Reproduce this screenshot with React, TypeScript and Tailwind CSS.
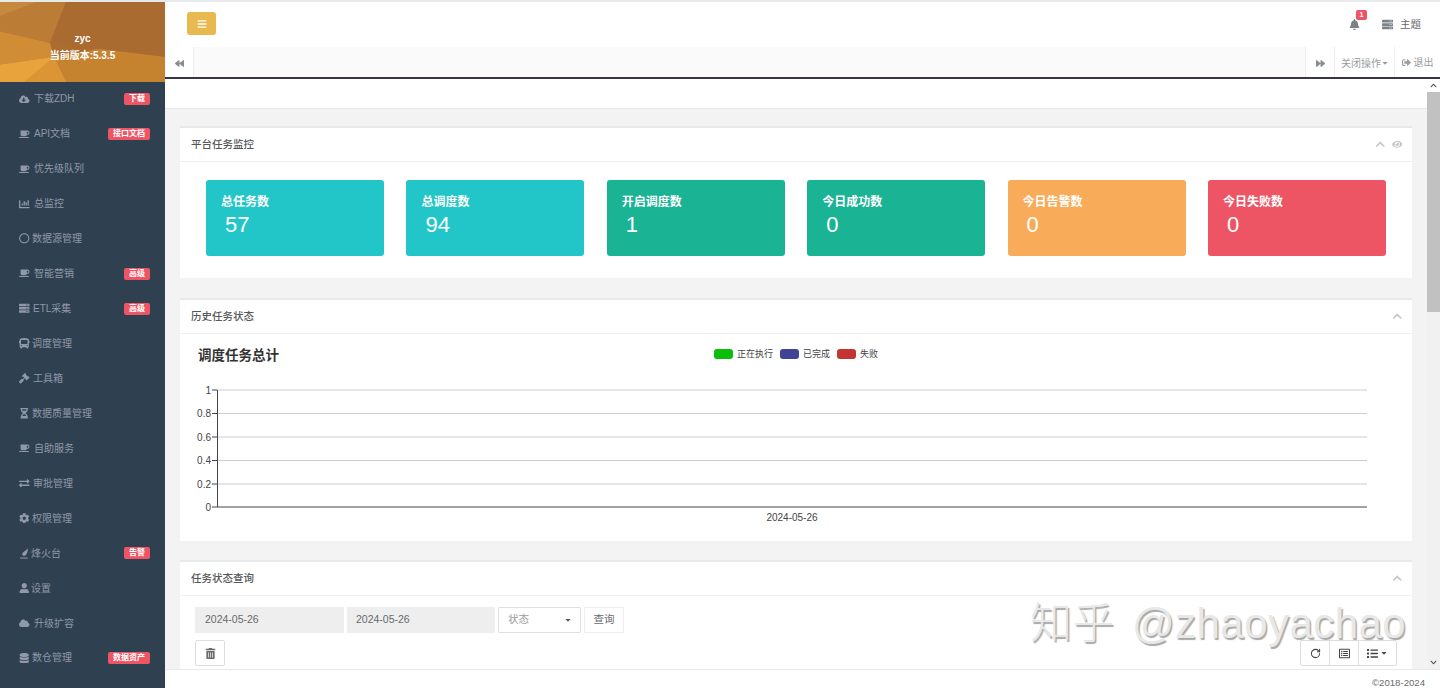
import type { ReactNode } from "react";
import {
  FaBackward,
  FaBars,
  FaBell,
  FaBus,
  FaCaretDown,
  FaChartBar,
  FaChevronDown,
  FaChevronUp,
  FaCloud,
  FaCloudDownloadAlt,
  FaCog,
  FaCoffee,
  FaDatabase,
  FaExchangeAlt,
  FaEye,
  FaForward,
  FaGavel,
  FaHourglassHalf,
  FaList,
  FaRegCircle,
  FaRegListAlt,
  FaServer,
  FaSignOutAlt,
  FaTrashAlt,
  FaUser,
} from "react-icons/fa";
import { RotateCw } from "lucide-react";

function BeaconIcon() {
  return (
    <svg viewBox="0 0 12 12" className="h-[11px] w-[11px]" fill="currentColor">
      <path d="M9.5 0.5C9.8 3.5 9 6 7.2 7.8c-1 1-2.4 1-3.1 0.3-0.8-0.8-0.7-2.1 0.3-3.1C6 3.2 7.6 2.8 9.5 0.5z" />
      <rect x="1" y="10.4" width="8.5" height="1.1" />
    </svg>
  );
}

const menu: { label: string; icon: ReactNode; slot: string; badge?: string }[] = [
  { label: "下载ZDH", icon: <FaCloudDownloadAlt />, slot: "w-[15px]", badge: "下载" },
  { label: "API文档", icon: <FaCoffee />, slot: "w-[15px]", badge: "接口文档" },
  { label: "优先级队列", icon: <FaCoffee />, slot: "w-[15px]" },
  { label: "总监控", icon: <FaChartBar />, slot: "w-[15px]" },
  { label: "数据源管理", icon: <FaRegCircle />, slot: "w-[13px]" },
  { label: "智能营销", icon: <FaCoffee />, slot: "w-[15px]", badge: "高级" },
  { label: "ETL采集", icon: <FaServer />, slot: "w-[14px]", badge: "高级" },
  { label: "调度管理", icon: <FaBus />, slot: "w-[13px]" },
  { label: "工具箱", icon: <FaGavel />, slot: "w-[14px]" },
  { label: "数据质量管理", icon: <FaHourglassHalf />, slot: "w-[13px]" },
  { label: "自助服务", icon: <FaCoffee />, slot: "w-[15px]" },
  { label: "审批管理", icon: <FaExchangeAlt />, slot: "w-[14px]" },
  { label: "权限管理", icon: <FaCog />, slot: "w-[13px]" },
  { label: "烽火台", icon: <BeaconIcon />, slot: "w-[12px]", badge: "告警" },
  { label: "设置", icon: <FaUser />, slot: "w-[12px]" },
  { label: "升级扩容", icon: <FaCloud />, slot: "w-[15px]" },
  { label: "数仓管理", icon: <FaDatabase />, slot: "w-[13px]", badge: "数据资产" },
];

const stats = [
  { title: "总任务数", value: "57", color: "bg-[#23c6c8]" },
  { title: "总调度数", value: "94", color: "bg-[#23c6c8]" },
  { title: "开启调度数", value: "1", color: "bg-[#1ab394]" },
  { title: "今日成功数", value: "0", color: "bg-[#1ab394]" },
  { title: "今日告警数", value: "0", color: "bg-[#f8ac59]" },
  { title: "今日失败数", value: "0", color: "bg-[#ed5565]" },
];

const font = '"Liberation Sans", "Noto Sans CJK SC", sans-serif';

function ProfileBackdrop() {
  return (
    <svg viewBox="0 0 165 82" preserveAspectRatio="none" className="absolute inset-0 h-full w-full">
      <rect width="165" height="82" fill="#ab6c30" />
      <polygon points="0,0 66,0 50,42 0,30" fill="#bb7c35" />
      <polygon points="0,0 36,0 0,14" fill="#c68a3e" />
      <polygon points="0,30 50,42 54,56 0,64" fill="#d08d36" />
      <polygon points="0,64 54,56 66,82 0,82" fill="#e8a33c" />
      <polygon points="54,56 100,48 165,56 165,82 66,82" fill="#c5822f" />
      <polygon points="54,56 66,82 24,82" fill="#dc9535" />
      <polygon points="50,42 66,0 165,0 165,56 100,48" fill="#aa6b31" />
    </svg>
  );
}

function Sidebar() {
  return (
    <aside className="flex w-[165px] shrink-0 flex-col bg-[#2f4050]">
      <div className="relative h-[82px] border-t-2 border-[#e7eaec]">
        <ProfileBackdrop />
        <div className="relative pt-[28px] text-center text-[10px] font-bold leading-[17px] text-white">
          <div>zyc</div>
          <div>当前版本:5.3.5</div>
        </div>
      </div>
      <nav className="-mt-[0.5px]">
        {menu.map((item) => (
          <div key={item.label} className="flex h-[34.95px] items-center justify-between pl-[19px] pr-[15px] text-[10px] text-[#8f99a8]">
            <span className="flex items-center">
              <span className={`text-[10.5px] ${item.slot}`}>{item.icon}</span>
              {item.label}
            </span>
            {item.badge && (
              <span className="rounded-[2px] bg-[#ed5565] px-[5px] text-[8px] font-bold leading-[12px] text-white">{item.badge}</span>
            )}
          </div>
        ))}
      </nav>
    </aside>
  );
}

function TopBar() {
  return (
    <>
      <header className="flex h-[47px] shrink-0 items-center justify-between border-t-2 border-[#e7eaec] bg-white pl-[22px] pr-[19px]">
        <button className="mb-[2px] flex h-[23px] w-[29px] items-center justify-center rounded-[3px] bg-[#e8b94e] text-[10px] text-white">
          <FaBars />
        </button>
        <div className="flex items-center gap-[22px] text-[10.5px] text-[#676a6c]">
          <span className="relative text-[11px] text-[#7d8288]">
            <FaBell />
            <span className="absolute -right-[7px] -top-[9px] rounded-[2px] bg-[#ed5565] px-[3.5px] text-[7px] font-bold leading-[10px] text-white">1</span>
          </span>
          <span className="flex items-center gap-[7px]">
            <FaServer className="text-[11px] text-[#7d8288]" />
            主题
          </span>
        </div>
      </header>
      <div className="flex h-[32px] shrink-0 items-stretch border-b-2 border-[#3c3344] bg-[#fafafa] text-[10px] text-[#999c9e]">
        <button className="flex w-[29px] items-center justify-center border-r border-[#eeeeee] bg-white pt-[2px] text-[9px] text-[#8a8d90]">
          <FaBackward />
        </button>
        <div className="flex-1" />
        <button className="flex w-[30px] items-center justify-center border-x border-[#eeeeee] bg-white pt-[2px] text-[9px] text-[#8a8d90]">
          <FaForward />
        </button>
        <button className="flex w-[60px] items-center justify-center border-r border-[#eeeeee] bg-white pl-[1px] pt-[2px]">
          关闭操作
          <FaCaretDown className="text-[8px]" />
        </button>
        <button className="flex w-[45px] items-center justify-center gap-[3px] bg-white pt-[1px]">
          <FaSignOutAlt className="text-[9px]" />
          退出
        </button>
      </div>
    </>
  );
}

function Panel({ title, tools, className, children }: { title: string; tools: ReactNode; className: string; children: ReactNode }) {
  return (
    <section className={`border-t-2 border-[#e7eaec] bg-white ${className}`}>
      <div className="flex h-[34px] items-center justify-between border-b border-[#eeeeee] pl-[11px] pr-[10px] text-[10.5px] text-[#555759]">
        <span className="font-medium">{title}</span>
        <span className="flex items-center gap-[6px] text-[10.5px] text-[#c4c6c8]">{tools}</span>
      </div>
      {children}
    </section>
  );
}

function HistoryChart() {
  const ticks = [
    { y: 390, label: "1" },
    { y: 413.5, label: "0.8" },
    { y: 437, label: "0.6" },
    { y: 460.5, label: "0.4" },
    { y: 484, label: "0.2" },
    { y: 507, label: "0" },
  ];
  return (
    <svg viewBox="180 334 1232 206" className="block h-[206px] w-full" style={{ fontFamily: font }}>
      <text x="198" y="360" fontSize="13.5" fontWeight="700" fill="#333333">调度任务总计</text>
      <rect x="714" y="349" width="19" height="10" rx="3" fill="#0abf0a" />
      <text x="737" y="357" fontSize="9" fill="#444444">正在执行</text>
      <rect x="780" y="349" width="19" height="10" rx="3" fill="#3f4495" />
      <text x="803" y="357" fontSize="9" fill="#444444">已完成</text>
      <rect x="837" y="349" width="19" height="10" rx="3" fill="#c23531" />
      <text x="860" y="357" fontSize="9" fill="#444444">失败</text>
      {ticks.map((tick) => (
        <g key={tick.label}>
          <line x1="217" x2="1367" y1={tick.y} y2={tick.y} stroke={tick.label === "0" ? "#444444" : "#cccccc"} strokeWidth="1" />
          <line x1="212" x2="217" y1={tick.y} y2={tick.y} stroke="#444444" strokeWidth="1" />
          <text x="211" y={tick.y + 3.5} fontSize="10" textAnchor="end" fill="#444444">{tick.label}</text>
        </g>
      ))}
      <line x1="217.5" x2="217.5" y1="390" y2="507" stroke="#444444" strokeWidth="1" />
      <text x="792" y="521" fontSize="10" textAnchor="middle" fill="#444444">2024-05-26</text>
    </svg>
  );
}

function QueryForm() {
  return (
    <div className="px-[15px] pt-[11px]">
      <div className="flex h-[26px] items-stretch gap-[3px] text-[10.5px]">
        <div className="flex w-[149px] items-center bg-[#eeeeee] pl-[10px] text-[#676a6c]">2024-05-26</div>
        <div className="flex w-[148px] items-center bg-[#eeeeee] pl-[9px] text-[#676a6c]">2024-05-26</div>
        <div className="flex w-[83px] items-center justify-between rounded-[1px] border border-[#dfe0e1] pl-[9px] pr-[8px] text-[#999c9e]">
          状态
          <FaCaretDown className="text-[8px] text-[#555555]" />
        </div>
        <button className="w-[40px] border border-[#eeeeee] text-[#676a6c]">查询</button>
      </div>
      <div className="mt-[7px] flex h-[26px] items-stretch justify-between">
        <button className="flex w-[30px] items-center justify-center rounded-[2px] border border-[#dddddd] bg-white text-[11px] text-[#676a6c]">
          <FaTrashAlt />
        </button>
        <div className="relative flex w-[97px] items-stretch rounded-[2px] border border-[#dddddd] bg-white text-[#444444]">
          <span className="flex w-[29px] items-center justify-center border-r border-[#dddddd]">
            <RotateCw size={11} strokeWidth={2.2} />
          </span>
          <span className="flex w-[29px] items-center justify-center border-r border-[#dddddd] text-[11px]">
            <FaRegListAlt />
          </span>
          <span className="flex flex-1 items-center justify-center gap-[2px] text-[11px]">
            <FaList />
            <FaCaretDown className="text-[8px]" />
          </span>
        </div>
      </div>
    </div>
  );
}

function Scrollbar() {
  return (
    <div className="flex w-[13px] shrink-0 flex-col items-center bg-[#f1f1f1] text-[7px] text-[#505050]">
      <div className="flex h-[13px] w-full items-center justify-center bg-white">
        <FaChevronUp />
      </div>
      <div className="h-[220px] w-full bg-[#c1c1c1]" />
      <div className="flex-1" />
      <div className="flex h-[13px] items-center">
        <FaChevronDown />
      </div>
    </div>
  );
}

export default function App() {
  return (
    <div className="flex h-[688px] w-[1440px] overflow-hidden bg-white" style={{ fontFamily: font }}>
      <Sidebar />
      <main className="relative flex min-w-0 flex-1 flex-col">
        <TopBar />
        <div className="flex min-h-0 flex-1">
          <div className="min-w-0 flex-1 overflow-hidden bg-[#f3f3f4]">
            <div className="h-[30px] border-b border-[#e7eaec] bg-white" />
            <div className="px-[15px] pt-[17px]">
              <Panel
                title="平台任务监控"
                className="h-[152px]"
                tools={
                  <>
                    <FaChevronUp />
                    <FaEye className="text-[10.5px]" />
                  </>
                }
              >
                <div className="grid grid-cols-6 gap-[22.4px] px-[26px] pt-[18px]">
                  {stats.map((stat) => (
                    <div key={stat.title} className={`h-[76px] rounded-[3px] px-[15px] pt-[14px] text-white ${stat.color}`}>
                      <div className="text-[12px] font-bold leading-[16px]">{stat.title}</div>
                      <div className="pl-[4px] pt-[1px] text-[22px] leading-[28px]">{stat.value}</div>
                    </div>
                  ))}
                </div>
              </Panel>
              <Panel title="历史任务状态" className="mt-[20px] h-[243px]" tools={<FaChevronUp />}>
                <HistoryChart />
              </Panel>
              <Panel title="任务状态查询" className="mt-[19px] h-[200px]" tools={<FaChevronUp />}>
                <QueryForm />
              </Panel>
            </div>
          </div>
          <Scrollbar />
        </div>
        <footer className="flex h-[19px] shrink-0 items-end justify-end border-t border-[#e7eaec] bg-white pr-[15px] text-[9.6px] leading-[11px] text-[#676a6c]">
          ©2018-2024
        </footer>
        <div className="pointer-events-none absolute left-[865px] top-[594px] whitespace-nowrap text-[42px] font-light leading-[60px] tracking-[0.45px] text-[#e8e8e8] [text-shadow:1.5px_1.5px_1px_#a8a8a8] [word-spacing:5px]">
          知乎 @zhaoyachao
        </div>
      </main>
    </div>
  );
}
